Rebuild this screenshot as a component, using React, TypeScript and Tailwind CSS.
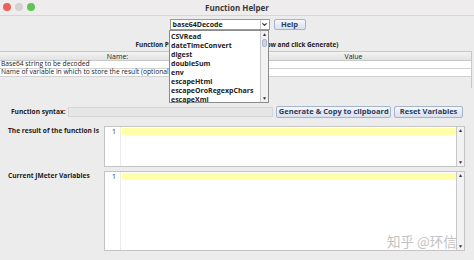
import { ChevronDown } from 'lucide-react';

const functions = [
  'CSVRead',
  'dateTimeConvert',
  'digest',
  'doubleSum',
  'env',
  'escapeHtml',
  'escapeOroRegexpChars',
  'escapeXml',
];

function ScrollBar({ thumb }: { thumb?: boolean }) {
  return (
    <div className="w-[8px] flex flex-col border-l border-[#c8c8c8] bg-[#f2f2f2]">
      <div className="h-[7px] flex items-center justify-center text-[5px] leading-none text-[#333]">▲</div>
      <div className="flex-1 px-[1px]">
        {thumb && <div className="h-[8px] mt-[1px] rounded-[2px] bg-[#c9d3e3] border border-[#a9b6cc]" />}
      </div>
      <div className="h-[7px] flex items-center justify-center text-[5px] leading-none text-[#333]">▼</div>
    </div>
  );
}

function CodeArea({ height }: { height: string }) {
  return (
    <div className={`flex-1 flex bg-white border border-[#c4c4c4] ${height}`}>
      <div className="w-[16px] border-r border-[#ececec] text-[7px] leading-[8px] pl-[7px] pt-[1px] text-[#333]">1</div>
      <div className="flex-1 pt-[1px] pl-[1px]">
        <div className="h-[7px] bg-[#ffffaa]" />
      </div>
      <ScrollBar />
    </div>
  );
}

export default function App() {
  return (
    <div className="relative w-[474px] h-[260px] overflow-hidden bg-[#ececec] font-['Open_Sans',sans-serif] text-[#222]">
      {/* title bar */}
      <div className="relative h-[16px] flex items-center justify-center bg-[#efeced] border-b border-[#d6d6d6]">
        <div className="absolute left-[3px] top-[3px] flex gap-[4px]">
          <span className="w-[8px] h-[8px] rounded-full bg-[#ec5f5a]" />
          <span className="w-[8px] h-[8px] rounded-full bg-[#d3d1d2]" />
          <span className="w-[8px] h-[8px] rounded-full bg-[#5fc452]" />
        </div>
        <span className="text-[8px] font-bold text-[#3a3a3a]">Function Helper</span>
      </div>

      {/* combo + help */}
      <div className="mt-[3px] flex justify-center gap-[4px] pl-[1px]">
        <div className="w-[100px] h-[11px] flex items-center bg-white border border-[#9a9a9a]">
          <span className="flex-1 pl-[2px] text-[7px] font-bold leading-none">base64Decode</span>
          <div className="w-[9px] h-full flex items-center justify-center border-l border-[#c8c8c8]">
            <ChevronDown className="w-[7px] h-[7px] text-[#333]" strokeWidth={4} />
          </div>
        </div>
        <div className="w-[32px] h-[11px] flex items-center justify-center rounded-[2px] border border-[#a7b3c7] bg-gradient-to-b from-[#f4f7fc] to-[#d8e1ef] text-[7.5px] font-bold text-[#2b3b58]">
          Help
        </div>
      </div>

      {/* heading */}
      <div className="mt-[10px] text-center text-[6.3px] font-bold leading-[9px]">
        Function Parameters (fill in the values below and click Generate)
      </div>

      {/* parameter table */}
      <div className="mt-[2px] mr-[2px] h-[37px] border-r border-[#c8c8c8] bg-[#ececec]">
        <div className="h-[10px] flex bg-gradient-to-b from-[#f3f3f3] to-[#e2e2e2] border-y border-[#c8c8c8] text-[7px] leading-none">
          <div className="flex-1 flex items-center justify-center border-r border-[#c8c8c8]">Name:</div>
          <div className="flex-1 flex items-center justify-center">Value</div>
        </div>
        {['Base64 string to be decoded', 'Name of variable in which to store the result (optional)'].map((t) => (
          <div key={t} className="h-[8px] flex bg-white border-b border-[#d2d2d2] text-[6.7px] leading-none">
            <div className="flex-1 pl-[1px] flex items-center whitespace-nowrap">{t}</div>
            <div className="flex-1" />
          </div>
        ))}
      </div>

      {/* syntax row */}
      <div className="mt-[18px] flex items-center pl-[11px] pr-[11px]">
        <span className="w-[57px] text-[6.6px] font-bold whitespace-nowrap">Function syntax:</span>
        <div className="w-[206px] h-[10px] bg-[#e6e6e6] border border-[#d4d4d4]" />
        <div className="ml-[3px] w-[115px] h-[12px] flex items-center justify-center rounded-[2px] border border-[#a7b3c7] bg-gradient-to-b from-[#f4f7fc] to-[#d8e1ef] text-[7.5px] font-bold text-[#2b3b58]">
          Generate &amp; Copy to clipboard
        </div>
        <div className="ml-[3px] w-[69px] h-[12px] flex items-center justify-center rounded-[2px] border border-[#a7b3c7] bg-gradient-to-b from-[#f4f7fc] to-[#d8e1ef] text-[7.5px] font-bold text-[#2b3b58]">
          Reset Variables
        </div>
      </div>

      {/* result */}
      <div className="mt-[8px] flex pl-[8px] pr-[9px]">
        <span className="w-[96px] pt-[1px] text-[6.6px] font-bold leading-[8px] whitespace-nowrap">The result of the function is</span>
        <CodeArea height="h-[41px]" />
      </div>

      {/* variables */}
      <div className="mt-[4px] flex pl-[8px] pr-[9px]">
        <span className="w-[96px] pt-[1px] text-[6.6px] font-bold leading-[8px] whitespace-nowrap">Current JMeter Variables</span>
        <CodeArea height="h-[80px]" />
      </div>

      {/* watermark */}
      <div className="absolute left-[387px] top-[231px] text-[13.5px] text-[#c2c2c2] font-['Noto_Sans_CJK_SC',sans-serif]">
        知乎 @环信
      </div>

      {/* open dropdown list */}
      <div className="absolute left-[169px] top-[30px] w-[100px] h-[73px] flex bg-white border border-[#8a8a8a]">
        <div className="flex-1 pt-[1px]">
          {functions.map((f) => (
            <div key={f} className="h-[9px] pl-[1px] flex items-center text-[7px] font-bold leading-none whitespace-nowrap">
              {f}
            </div>
          ))}
        </div>
        <ScrollBar thumb />
      </div>
    </div>
  );
}
